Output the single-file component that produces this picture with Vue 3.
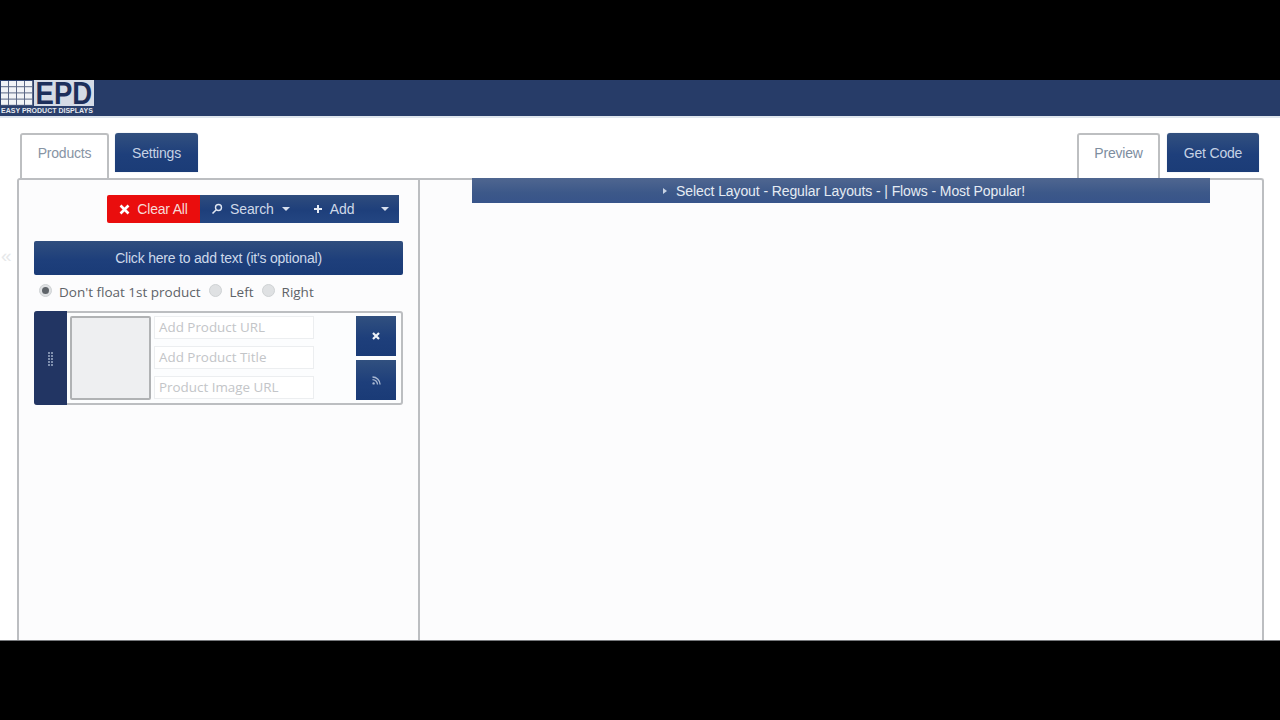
<script setup>
const fields = ['Add Product URL', 'Add Product Title', 'Product Image URL']
const gridCells = []
for (let r = 0; r < 4; r++) for (let c = 0; c < 4; c++) gridCells.push({ x: 1 + c * 8, y: 1 + r * 6.2 })
</script>

<template>
  <div class="screen">
    <div class="letterbox-top"></div>
    <div class="app">
      <header class="topbar">
        <div class="logo">
          <div class="logo-main">
            <svg class="logo-grid" width="33" height="26" viewBox="0 0 33 26">
              <rect x="1" y="1" width="32" height="24.5" fill="#5b6785" />
              <rect v-for="(c, i) in gridCells" :key="i" :x="c.x" :y="c.y" width="7" height="5.2" fill="#f1f3f6" />
            </svg>
            <div class="logo-box"><span class="logo-epd">EPD</span></div>
          </div>
          <div class="logo-sub">EASY PRODUCT DISPLAYS</div>
        </div>
      </header>

      <div class="tabs">
        <div class="tab-group">
          <div class="tab tab-active products">Products</div>
          <div class="tab tab-dark settings">Settings</div>
        </div>
        <div class="tab-group">
          <div class="tab tab-active preview">Preview</div>
          <div class="tab tab-dark getcode">Get Code</div>
        </div>
      </div>

      <div class="panels">
        <span class="collapse">«</span>
        <section class="left">
          <div class="toolbar">
            <button class="tb-btn clear">
              <svg width="11" height="11" viewBox="0 0 11 11"><path d="M1.5 1.5l8 8M9.5 1.5l-8 8" stroke="#fff" stroke-width="2.6" /></svg>
              Clear All
            </button>
            <div class="tb-blue">
              <span class="tb-item search">
                <svg width="12" height="12" viewBox="0 0 12 12"><circle cx="7.5" cy="4.5" r="3" fill="none" stroke="#dfe6f2" stroke-width="1.4" /><path d="M5 7l-3.5 3.5" stroke="#dfe6f2" stroke-width="1.6" /></svg>
                Search
                <i class="caret"></i>
              </span>
              <span class="tb-item add">
                <svg width="10" height="10" viewBox="0 0 10 10"><path d="M5 1v8M1 5h8" stroke="#e6ecf5" stroke-width="2" /></svg>
                Add
              </span>
              <i class="caret last"></i>
            </div>
          </div>

          <div class="text-bar">Click here to add text (it's optional)</div>

          <div class="radios">
            <span class="radio checked"></span><span class="r-label first">Don't float 1st product</span>
            <span class="radio"></span><span class="r-label second">Left</span>
            <span class="radio"></span><span class="r-label">Right</span>
          </div>

          <div class="product">
            <div class="handle"><span class="dots"><i v-for="n in 10" :key="n"></i></span></div>
            <div class="thumb"></div>
            <div class="fields">
              <div v-for="f in fields" :key="f" class="field">{{ f }}</div>
            </div>
            <div class="actions">
              <div class="act">
                <svg width="8" height="8" viewBox="0 0 8 8"><path d="M1 1l6 6M7 1l-6 6" stroke="#eef2f8" stroke-width="2.2" /></svg>
              </div>
              <div class="act">
                <svg width="9" height="9" viewBox="0 0 9 9"><circle cx="1.6" cy="7.4" r="1.2" fill="#aab9d2" /><path d="M.5 3.6a5 5 0 0 1 5 5M.5 1a7.6 7.6 0 0 1 7.6 7.6" fill="none" stroke="#aab9d2" stroke-width="1.3" /></svg>
              </div>
            </div>
          </div>
        </section>

        <section class="right">
          <div class="layout-bar">
            <i class="tri"></i>
            Select Layout - Regular Layouts - | Flows - Most Popular!
          </div>
        </section>
      </div>
    </div>
    <div class="letterbox-bottom"></div>
  </div>
</template>

<style scoped>
.screen {
  width: 1280px;
  height: 720px;
  display: flex;
  flex-direction: column;
  background: #000;
  overflow: hidden;
  font-family: "Open Sans", "Liberation Sans", sans-serif;
}
.letterbox-top { height: 80px; flex: none; background: #000; }
.letterbox-bottom { flex: 1; background: #000; border-top: 1px solid #77797c; }
.app {
  height: 560px;
  flex: none;
  background: #fff;
  display: flex;
  flex-direction: column;
}
.topbar {
  height: 36px;
  flex: none;
  background: #273c68;
  border-bottom: 2px solid #dfe6ee;
  box-sizing: content-box;
}
.logo { width: 94px; height: 36px; background: #2a3f6c; }
.logo-main { display: flex; height: 26px; }
.logo-grid { flex: none; }
.logo-box {
  width: 60px;
  height: 26px;
  margin-left: 1px;
  background: #d5dbe6;
  display: flex;
  justify-content: center;
  align-items: center;
}
.logo-epd {
  font-family: "Liberation Sans", sans-serif;
  font-weight: 700;
  font-size: 32px;
  line-height: 26px;
  color: #1d2f5b;
  display: inline-block;
  transform: scaleX(0.86);
}
.logo-sub {
  font-family: "Liberation Sans", sans-serif;
  font-weight: 700;
  font-size: 7px;
  line-height: 10px;
  color: #e4e8ef;
  white-space: nowrap;
  padding-left: 1px;
}
.tabs {
  height: 60px;
  flex: none;
  box-sizing: border-box;
  padding: 15px 21px 0 20px;
  display: flex;
  justify-content: space-between;
  align-items: flex-start;
}
.tab-group { display: flex; gap: 6px; align-items: flex-start; }
.tab {
  box-sizing: border-box;
  font-family: "Liberation Sans", sans-serif;
  font-size: 14px;
  letter-spacing: -0.2px;
  display: flex;
  align-items: center;
  justify-content: center;
  border-radius: 3px 3px 0 0;
}
.tab-active {
  height: 45px;
  padding-bottom: 7px;
  background: #fff;
  color: #7d8da0;
  border: 2px solid #bdbfc1;
  border-bottom: 0;
}
.tab-dark {
  height: 39px;
  color: #c6d2e4;
  background: linear-gradient(#32507f, #1e3f7b 55%, #1b3c77);
  box-shadow: 0 0 1px #9db0c6;
}
.products { width: 89px; color: #8794a4; }
.settings { width: 83px; }
.preview { width: 83px; }
.getcode { width: 92px; margin-left: 1px; }
.panels {
  position: relative;
  flex: 1;
  min-height: 0;
  margin: 0 16px 0 17px;
  background: #fcfcfd;
  border: 2px solid #bcbec1;
  border-bottom: 0;
  border-radius: 3px 3px 0 0;
  display: flex;
  box-sizing: border-box;
}
.collapse {
  position: absolute;
  left: -18px;
  top: 67px;
  font-size: 19px;
  line-height: 18px;
  color: #e6e8ea;
  font-family: "Liberation Sans", sans-serif;
}
.left {
  width: 401px;
  flex: none;
  box-sizing: border-box;
  border-right: 2px solid #bcbec1;
  padding: 15px 15px 0 15px;
  display: flex;
  flex-direction: column;
}
.toolbar { display: flex; justify-content: flex-end; height: 28px; margin-right: 4px; }
.tb-btn {
  width: 93px;
  height: 28px;
  padding: 0;
  border: 0;
  background: #ea0d0d;
  color: #f7d9d5;
  font-family: "Liberation Sans", sans-serif;
  font-size: 14px;
  letter-spacing: -0.2px;
  display: flex;
  align-items: center;
  justify-content: center;
  gap: 7px;
  border-radius: 2px 0 0 2px;
}
.tb-blue {
  width: 199px;
  height: 28px;
  box-sizing: border-box;
  background: linear-gradient(#2f4c7d, #1e3f7b 55%, #244682);
  color: #cfd9e8;
  font-family: "Liberation Sans", sans-serif;
  font-size: 14px;
  letter-spacing: -0.1px;
  display: flex;
  align-items: center;
}
.tb-item { display: flex; align-items: center; gap: 7px; }
.search { margin-left: 11px; }
.add { margin-left: 23px; }
.caret {
  display: inline-block;
  width: 0;
  height: 0;
  margin-left: 1px;
  border-left: 4px solid transparent;
  border-right: 4px solid transparent;
  border-top: 4px solid #d7e0ee;
}
.caret.last { margin-left: 27px; }
.text-bar {
  margin-top: 18px;
  height: 34px;
  flex: none;
  background: linear-gradient(#304e7e, #1e3f7b 55%, #1a3b77);
  border-radius: 2px;
  color: #cdd9ea;
  font-family: "Liberation Sans", sans-serif;
  font-size: 14px;
  letter-spacing: -0.2px;
  display: flex;
  align-items: center;
  justify-content: center;
}
.radios {
  margin-top: 5px;
  height: 24px;
  padding-left: 5px;
  display: flex;
  align-items: center;
  font-size: 13.5px;
  color: #5e6368;
}
.radio {
  width: 11px;
  height: 11px;
  border-radius: 50%;
  background: #dfe1e3;
  border: 1px solid #cfd2d4;
  margin-top: -4px;
  position: relative;
  flex: none;
}
.radio.checked::after {
  content: "";
  position: absolute;
  inset: 2px;
  border-radius: 50%;
  background: #5f6469;
}
.r-label { margin-left: 7px; white-space: nowrap; }
.r-label.first { margin-right: 8px; }
.r-label.second { margin-left: 8px; margin-right: 8px; }
.product {
  margin-top: 7px;
  height: 94px;
  flex: none;
  box-sizing: border-box;
  border: 2px solid #bcbec1;
  border-left: 0;
  border-radius: 3px;
  background: #fcfdfe;
  display: flex;
  align-items: stretch;
}
.handle {
  width: 33px;
  flex: none;
  margin: -2px 0;
  background: #223563;
  border-radius: 3px 0 0 3px;
  display: flex;
  align-items: center;
  justify-content: center;
}
.dots {
  display: grid;
  grid-template-columns: repeat(2, 2px);
  gap: 1px;
  margin-top: 1px;
}
.dots i { width: 2px; height: 2px; background: #7f8fae; }
.thumb {
  width: 81px;
  height: 84px;
  margin: 3px 0 0 3px;
  box-sizing: border-box;
  background: #eeeff1;
  border: 2px solid #b0b2b4;
  border-radius: 2px;
  flex: none;
}
.fields {
  width: 160px;
  margin: 3px 0 0 3px;
  display: flex;
  flex-direction: column;
  gap: 7px;
}
.field {
  height: 23px;
  box-sizing: border-box;
  background: #fff;
  border: 1px solid #eceef0;
  color: #c3c5c8;
  font-size: 13.4px;
  line-height: 21px;
  padding-left: 4px;
  white-space: nowrap;
  overflow: hidden;
}
.actions {
  margin: 3px 0 0 42px;
  display: flex;
  flex-direction: column;
  gap: 4px;
}
.act {
  width: 40px;
  height: 40px;
  background: linear-gradient(#31507f, #1e3f7b 55%, #1a3b77);
  display: flex;
  align-items: center;
  justify-content: center;
}
.right { flex: 1; min-width: 0; padding-left: 52px; }
.layout-bar {
  width: 738px;
  height: 25px;
  margin-top: -2px;
  background: linear-gradient(#4f6690, #3c5889 60%, #37548a);
  color: #e5ebf3;
  font-family: "Liberation Sans", sans-serif;
  font-size: 14px;
  letter-spacing: -0.1px;
  display: flex;
  align-items: center;
  justify-content: center;
  gap: 9px;
  padding-left: 6px;
  box-sizing: border-box;
}
.tri {
  width: 0;
  height: 0;
  border-top: 3px solid transparent;
  border-bottom: 3px solid transparent;
  border-left: 4px solid #c8d3e4;
}
</style>
